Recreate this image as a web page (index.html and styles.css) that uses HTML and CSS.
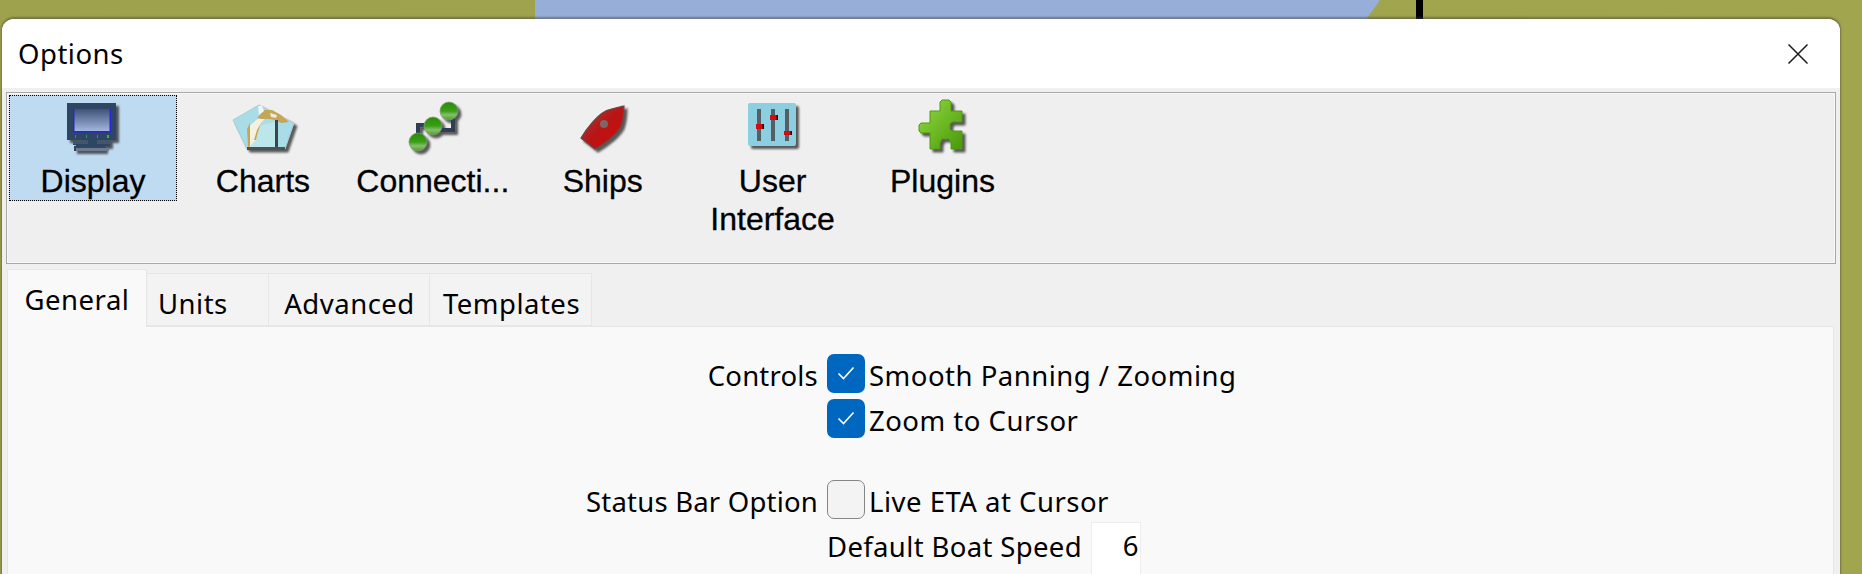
FILE: index.html
```html
<!DOCTYPE html>
<html lang="en">
<head>
    <meta charset="UTF-8">
    <title>Options</title>
    <link rel="stylesheet" href="styles.css">
</head>
<body>

    <div class="desk-blue"></div>
    <div class="desk-line"></div>

    <div class="window">
        <div class="titlebar">
            <span class="title">Options</span>
            <svg class="close" viewBox="0 0 20 20"><path d="M0.5 0.5 L19.5 19.5 M19.5 0.5 L0.5 19.5"/></svg>
        </div>

        <div class="content">
            <div class="toolbar">
                <div class="tool selected">
                    <svg class="icon" viewBox="0 0 64 64">
                        <defs>
                            <linearGradient id="screenGrad" x1="0" y1="0" x2="0" y2="1">
                                <stop offset="0" stop-color="#3f5378"/>
                                <stop offset="1" stop-color="#a6b9e0"/>
                            </linearGradient>
                        </defs>
                        <g class="shadow">
                            <path fill="#2f4564" d="M6 5 H55 V42 H49 V48 H44 V53 H13 V48 H15 V47 H12 V42 H6 Z"/>
                        </g>
                        <rect x="12" y="11" width="38" height="23" fill="url(#screenGrad)"/>
                        <rect x="12" y="11" width="1.5" height="23" fill="#2b22e0"/>
                        <rect x="48.5" y="11" width="1.5" height="23" fill="#2b22e0"/>
                        <rect x="12" y="33" width="38" height="1.5" fill="#2b22e0"/>
                        <rect x="14" y="37" width="1" height="3" fill="#18a838"/>
                        <rect x="25" y="37" width="1" height="3" fill="#18a838"/>
                        <rect x="36" y="37" width="1" height="3" fill="#18a838"/>
                        <rect x="46" y="37" width="2" height="3" fill="#18c838"/>
                        <rect x="12" y="42" width="15" height="4" fill="#44546a"/>
                        <rect x="36" y="42" width="14" height="4" fill="#44546a"/>
                        <rect x="15" y="50" width="33" height="3" fill="#6e7b8e"/>
                    </svg>
                    <div class="tool-label">Display</div>
                </div>
                <div class="tool">
                    <svg class="icon" viewBox="0 0 64 64">
                        <g class="shadow">
                            <path fill="#a8dce6" stroke="#a9cdd4" stroke-width="1" d="M28 7 L63 25 L54 51 L16 51 L2 22 Z"/>
                        </g>
                        <path fill="#bde6ec" d="M16 30 L45 24 V49 L17 50 Z"/>
                        <path fill="#f6f0de" d="M18 28 L28 20 L36 18 L30 25 L27 34 L25 42 L19 48 Z"/>
                        <path fill="#c4a65a" d="M26 20 L33 12 L41 12 L50 17 L58 24 L50 25 L44 22 L38 21 L30 21 Z"/>
                        <path fill="#c4a65a" d="M16 31 L19 25 L19 48 L17 50 Z"/>
                        <path fill="#c4a65a" d="M30 25 L27 34 L25 42 L23 42 L26 32 Z"/>
                        <path fill="#eef6f6" d="M27 8 L31 8 L33 13 L28 17 Z"/>
                        <path fill="#f2ead0" d="M39 15 L46 17 L45 20 L40 19 Z"/>
                        <rect x="44" y="22" width="3" height="29" fill="#39444e"/>
                        <rect x="16" y="49" width="38" height="3" fill="#4a5157"/>
                    </svg>
                    <div class="tool-label">Charts</div>
                </div>
                <div class="tool">
                    <svg class="icon" viewBox="0 0 64 64">
                        <defs>
                            <linearGradient id="ballGrad" x1="0" y1="0" x2="0" y2="1">
                                <stop offset="0" stop-color="#2a8a0c"/>
                                <stop offset="0.5" stop-color="#3b9f16"/>
                                <stop offset="0.72" stop-color="#86c070"/>
                                <stop offset="1" stop-color="#4c9c24"/>
                            </linearGradient>
                        </defs>
                        <g class="shadow">
                            <path fill="none" stroke="#2e3f55" stroke-width="4" d="M17 40 V27 H28 M36 32 H52 V20"/>
                            <circle cx="48" cy="13" r="9" fill="url(#ballGrad)" stroke="#7f9d74" stroke-width="0.8"/>
                            <circle cx="32" cy="28" r="9" fill="url(#ballGrad)" stroke="#7f9d74" stroke-width="0.8"/>
                            <circle cx="17" cy="44" r="9" fill="url(#ballGrad)" stroke="#7f9d74" stroke-width="0.8"/>
                        </g>
                    </svg>
                    <div class="tool-label">Connecti...</div>
                </div>
                <div class="tool">
                    <svg class="icon" viewBox="0 0 64 64">
                        <defs>
                            <linearGradient id="hullGrad" x1="0" y1="0" x2="1" y2="1">
                                <stop offset="0" stop-color="#a84040"/>
                                <stop offset="0.5" stop-color="#b81414"/>
                                <stop offset="1" stop-color="#e00606"/>
                            </linearGradient>
                        </defs>
                        <g class="shadow">
                            <path fill="url(#hullGrad)" stroke="#6e4444" stroke-width="1.2" d="M53 8 C44 10 37 11.5 33 14 C26 18 16 30 10 40 L24 51 C33 46 46 36 50 28 C52 22 53 14 53 8 Z"/>
                        </g>
                        <circle cx="33" cy="26" r="4" fill="#7d6666"/>
                    </svg>
                    <div class="tool-label">Ships</div>
                </div>
                <div class="tool">
                    <svg class="icon" viewBox="0 0 64 64">
                        <g class="shadow">
                            <rect x="7" y="5" width="48" height="43" rx="2" fill="#8bcfe0"/>
                        </g>
                        <rect x="16" y="11" width="4" height="32" fill="#565f66"/>
                        <rect x="30" y="11" width="4" height="32" fill="#565f66"/>
                        <rect x="44" y="11" width="4" height="32" fill="#565f66"/>
                        <rect x="15" y="26" width="8" height="5" fill="#111"/>
                        <rect x="15" y="26" width="6.5" height="5" fill="#d80a10"/>
                        <rect x="29" y="17" width="8" height="5" fill="#111"/>
                        <rect x="29" y="17" width="6.5" height="5" fill="#d80a10"/>
                        <rect x="43" y="33" width="8" height="4" fill="#111"/>
                        <rect x="43" y="33" width="6.5" height="4" fill="#d80a10"/>
                    </svg>
                    <div class="tool-label">User Interface</div>
                </div>
                <div class="tool">
                    <svg class="icon" viewBox="0 0 64 64">
                        <defs>
                            <linearGradient id="pluginGrad" x1="0" y1="0" x2="1" y2="1">
                                <stop offset="0" stop-color="#92dc40"/>
                                <stop offset="1" stop-color="#4a980c"/>
                            </linearGradient>
                        </defs>
                        <g class="shadow">
                            <path fill="url(#pluginGrad)" stroke="#4f9a10" stroke-width="1" d="M30 13 V4 L32 2 H39 L41 4 V13 H52 V24 H42 L40 26 V31 L42 33 H52 V51 H41 V45 L39 41 H32 L30 45 V51 H20 V35 H11 L9 33 V27 L11 25 H20 V13 Z"/>
                        </g>
                    </svg>
                    <div class="tool-label">Plugins</div>
                </div>
            </div>

            <div class="tabs">
                <div class="tab active">General</div>
                <div class="tab tab-units">Units</div>
                <div class="tab tab-advanced">Advanced</div>
                <div class="tab tab-templates">Templates</div>
            </div>

            <div class="panel">
                <div class="form-grid">
                    <div class="form-label">Controls</div>
                    <div class="check-row">
                        <span class="check on"><svg viewBox="0 0 38 38"><path d="M11.5 19.5 L16.5 24.5 L26.5 13.5"/></svg></span>
                        <span class="check-text">Smooth Panning / Zooming</span>
                    </div>

                    <div></div>
                    <div class="check-row">
                        <span class="check on"><svg viewBox="0 0 38 38"><path d="M11.5 19.5 L16.5 24.5 L26.5 13.5"/></svg></span>
                        <span class="check-text">Zoom to Cursor</span>
                    </div>

                    <div class="form-label section-start">Status Bar Option</div>
                    <div class="check-row section-start">
                        <span class="check"></span>
                        <span class="check-text">Live ETA at Cursor</span>
                    </div>

                    <div></div>
                    <div class="speed-row">
                        <span class="speed-label">Default Boat Speed</span>
                        <div class="speed-input">6</div>
                    </div>
                </div>
            </div>
        </div>
    </div>

</body>
</html>
```

FILE: styles.css
```css
html, body {
    height: 574px;
    overflow: hidden;
}
body {
    margin: 0;
    padding: 19px 22px 0 2px;
    box-sizing: border-box;
    position: relative;
    background: linear-gradient(100deg, #9fa24c, #a1a54e);
    font-family: "Noto Sans", sans-serif;
    font-size: 27.5px;
    letter-spacing: 0.5px;
    color: #000;
}
.desk-blue {
    position: absolute;
    left: 535px;
    top: 0;
    width: 845px;
    height: 19px;
    background-color: #97aed9;
    clip-path: polygon(0 0, 100% 0, 98.4% 100%, 0 100%);
}
.desk-line {
    position: absolute;
    left: 1416px;
    top: 0;
    width: 7px;
    height: 19px;
    background-color: #000;
}
.window {
    position: relative;
    height: 600px;
    background-color: #f0f0f0;
    border-radius: 12px 12px 0 0;
    box-shadow: 0 -1px 2px 1px rgba(60, 60, 60, 0.45);
}
.titlebar {
    height: 69px;
    display: flex;
    align-items: center;
    justify-content: space-between;
    padding: 0 32px 0 16px;
    background-color: #fff;
    border-radius: 12px 12px 0 0;
}
.close {
    width: 20px;
    height: 20px;
}
.close path {
    stroke: #1a1a1a;
    stroke-width: 1.5;
    fill: none;
}
.content {
    padding: 4px 4px 0 4px;
}
.toolbar {
    height: 172px;
    box-sizing: border-box;
    border: 1px solid #a8a8a8;
    box-shadow: inset 0 0 0 1px #f8f8f8;
    background-color: #efefef;
    padding: 2px;
    display: flex;
    align-items: flex-start;
    gap: 1.9px;
    font-family: "Liberation Sans", Arial, sans-serif;
    font-size: 32px;
    line-height: 38px;
    letter-spacing: 0;
    -webkit-text-stroke: 0.3px #000;
}
.tool {
    width: 168px;
    box-sizing: border-box;
    border: 1px dotted transparent;
    text-align: center;
}
.tool.selected {
    background-color: #bfdbf2;
    border-color: #000;
}
.icon {
    display: block;
    width: 64px;
    height: 64px;
    margin: 2px auto 0;
    overflow: visible;
}
.shadow {
    filter: drop-shadow(3px 3px 1px rgba(50, 50, 50, 0.8));
}
.tabs {
    display: flex;
    align-items: flex-end;
    height: 58px;
    margin: 5px 0 0 1px;
    position: relative;
    z-index: 1;
}
.tab {
    box-sizing: border-box;
    height: 53px;
    line-height: 59px;
    text-align: center;
    background-color: #f3f3f3;
    border: 1px solid #e6e6e6;
    border-left: none;
    margin-bottom: 1px;
}
.tab.active {
    width: 140px;
    height: 58px;
    line-height: 59px;
    margin-bottom: 0;
    background-color: #f9f9f9;
    border-left: 1px solid #e6e6e6;
    border-bottom: none;
    border-radius: 2px 2px 0 0;
}
.tab-units {
    width: 121.5px;
    text-align: left;
    padding-left: 11px;
}
.tab-advanced {
    width: 161px;
    padding-left: 2px;
}
.tab-templates {
    width: 162px;
    padding-left: 3px;
}
.panel {
    margin: -1px 2px 0 1px;
    height: 300px;
    box-sizing: border-box;
    background-color: #f9f9f9;
    border: 1px solid #e6e6e6;
}
.form-grid {
    display: grid;
    grid-template-columns: 810px 1fr;
    column-gap: 9px;
    row-gap: 6px;
    padding-top: 27px;
}
.form-label {
    text-align: right;
    height: 39px;
    line-height: 44px;
    letter-spacing: 0.2px;
}
.check-row {
    display: flex;
    align-items: flex-start;
    gap: 4px;
    height: 39px;
    line-height: 44px;
}
.section-start {
    margin-top: 36px;
}
.check {
    flex: none;
    width: 38px;
    height: 39px;
    box-sizing: border-box;
    border-radius: 7px;
    background-color: #f3f3f3;
    border: 1.5px solid #858585;
}
.check.on {
    background-color: #0067c0;
    border: none;
}
.check svg {
    display: block;
    width: 38px;
    height: 38px;
}
.check path {
    fill: none;
    stroke: #fff;
    stroke-width: 1.6;
}
.speed-row {
    display: flex;
    margin-top: -3px;
    line-height: 49px;
}
.speed-label {
    width: 264px;
    letter-spacing: 0.35px;
}
.speed-input {
    width: 50px;
    height: 60px;
    box-sizing: border-box;
    background-color: #fff;
    border: 1px solid #ededed;
    text-align: right;
    padding-right: 1px;
    line-height: 46px;
}
```
